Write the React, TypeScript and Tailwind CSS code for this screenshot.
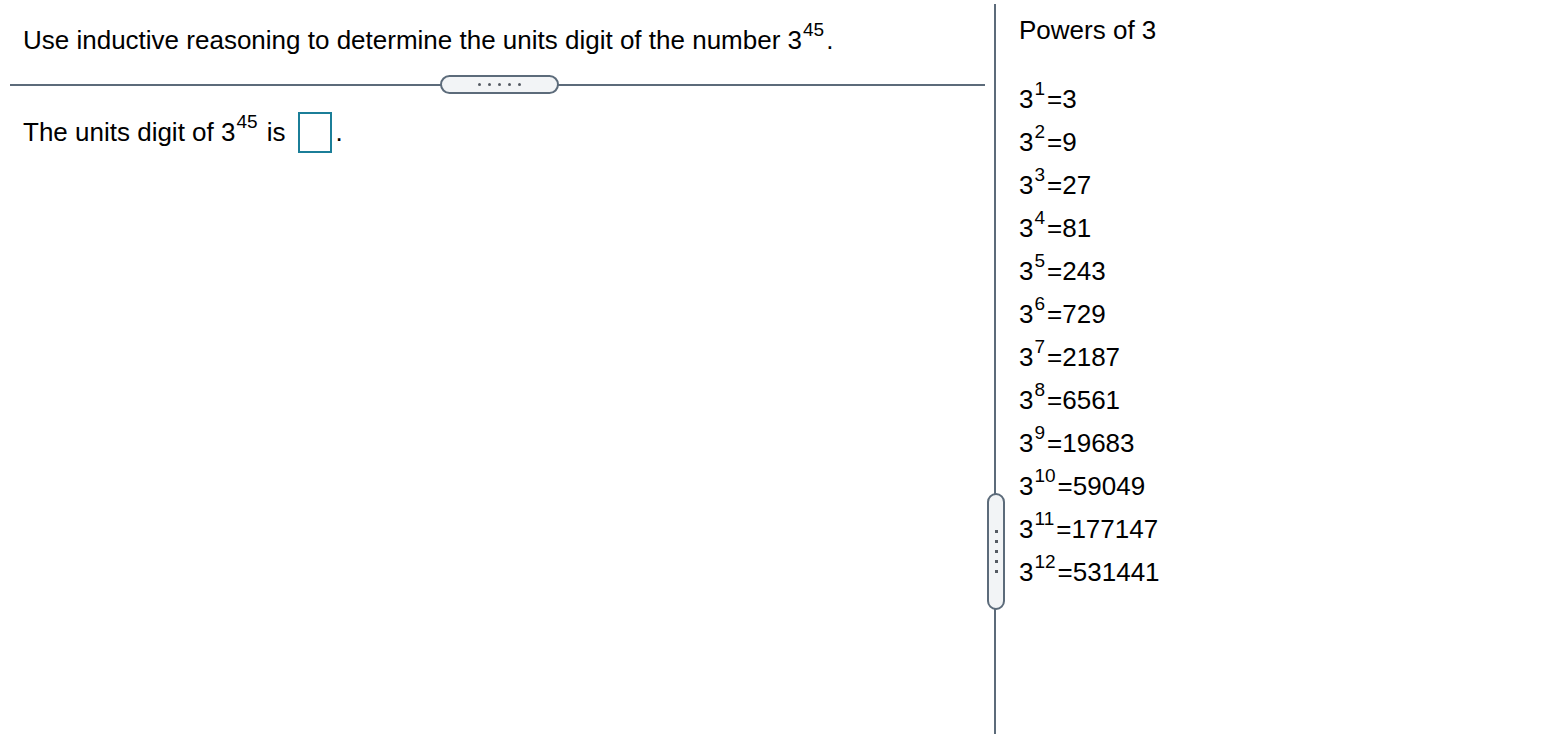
import React from "react";

const powers: [number, string][] = [
  [1, "3"],
  [2, "9"],
  [3, "27"],
  [4, "81"],
  [5, "243"],
  [6, "729"],
  [7, "2187"],
  [8, "6561"],
  [9, "19683"],
  [10, "59049"],
  [11, "177147"],
  [12, "531441"],
];

function Sup({ children }: { children: React.ReactNode }) {
  return (
    <span className="relative -top-[13px] ml-[1px] mr-[2px] text-[19px] leading-[0]">{children}</span>
  );
}

export default function App() {
  return (
    <div
      className="flex h-[734px] w-[1556px] overflow-hidden bg-white text-[26px] text-black"
      style={{ fontFamily: '"Liberation Sans", Arial, sans-serif' }}
    >
      {/* Left: question */}
      <div className="flex w-[994px] shrink-0 flex-col pt-[25px]">
        <div className="h-[30px] whitespace-nowrap pl-[23px] leading-[30px]">
          Use inductive reasoning to determine the units digit of the number 3<Sup>45</Sup>.
        </div>
        <div className="relative ml-[10px] mr-[9px] mt-[29px] h-[2px] bg-[#5c6b7a]">
          <div className="absolute left-[430px] top-[-9px] flex h-[19px] w-[119px] items-center justify-center gap-[7px] rounded-full border-2 border-[#5c6b7a] bg-[#f2f4f6]">
            <span className="h-[3px] w-[3px] rounded-full bg-[#555b63]" />
            <span className="h-[3px] w-[3px] rounded-full bg-[#555b63]" />
            <span className="h-[3px] w-[3px] rounded-full bg-[#555b63]" />
            <span className="h-[3px] w-[3px] rounded-full bg-[#555b63]" />
            <span className="h-[3px] w-[3px] rounded-full bg-[#555b63]" />
          </div>
        </div>
        <div className="mt-[26px] h-[41px] whitespace-nowrap pl-[23px] leading-[41px]">
          The units digit of 3<Sup>45</Sup> is
          <span className="ml-[12px] inline-block h-[41px] w-[34px] border-2 border-[#1b7e98] align-top" />
          <span className="ml-[4px]">.</span>
        </div>
      </div>

      {/* Divider */}
      <div className="relative mt-[4px] w-[2px] shrink-0 bg-[#5c6b7a]">
        <div className="absolute left-[-7px] top-[489px] flex h-[117px] w-[18px] flex-col items-center justify-center gap-[7px] rounded-full border-2 border-[#5c6b7a] bg-[#f2f4f6]">
          <span className="h-[3px] w-[3px] bg-[#555b63]" />
          <span className="h-[3px] w-[3px] bg-[#555b63]" />
          <span className="h-[3px] w-[3px] bg-[#555b63]" />
          <span className="h-[3px] w-[3px] bg-[#555b63]" />
          <span className="h-[3px] w-[3px] bg-[#555b63]" />
        </div>
      </div>

      {/* Right: powers of 3 */}
      <div className="flex flex-1 flex-col pl-[23px] pt-[15px]">
        <div className="h-[30px] leading-[30px]">Powers of 3</div>
        <div className="mt-[33px] flex flex-col">
          {powers.map(([n, v]) => (
            <div key={n} className="h-[43px] whitespace-nowrap leading-[43px]">
              3<Sup>{n}</Sup>={v}
            </div>
          ))}
        </div>
      </div>
    </div>
  );
}
